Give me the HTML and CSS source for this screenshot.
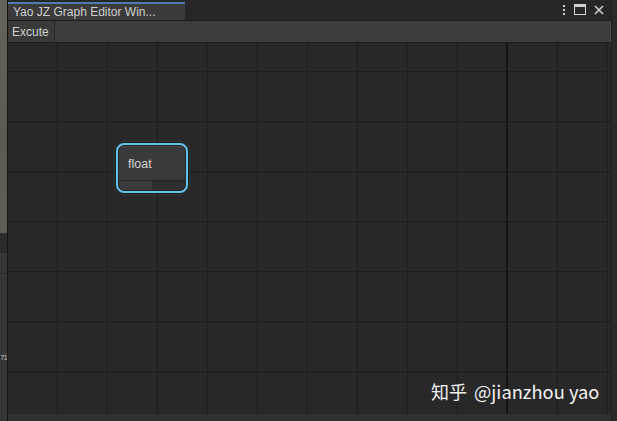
FILE: index.html
```html
<!DOCTYPE html>
<html lang="en">
<head>
    <meta charset="UTF-8">
    <title>Yao JZ Graph Editor Window</title>
    <link rel="stylesheet" href="styles.css">
</head>
<body>
<div class="app">
    <!-- the editor behind, cut off at the left -->
    <div class="side">
        <div class="side-scene"></div>
        <div class="side-bar"></div>
        <div class="side-panel"><span class="side-num">71</span></div>
    </div>

    <div class="window">
        <div class="titlebar">
            <div class="tab">Yao JZ Graph Editor Win...</div>
            <div class="win-icons">
                <svg width="4" height="12" viewBox="0 0 4 12"><rect x="1" y="1" width="2" height="2" fill="#d0d0d0"/><rect x="1" y="5" width="2" height="2" fill="#d0d0d0"/><rect x="1" y="9" width="2" height="2" fill="#d0d0d0"/></svg>
                <svg width="12" height="11" viewBox="0 0 12 11"><rect x="0.5" y="0.5" width="11" height="10" fill="none" stroke="#d0d0d0"/><rect x="1" y="1" width="10" height="2" fill="#d0d0d0"/></svg>
                <svg width="10" height="10" viewBox="0 0 10 10"><path d="M1 1 L9 9 M9 1 L1 9" stroke="#d0d0d0" stroke-width="1.6"/></svg>
            </div>
        </div>

        <div class="toolbar">
            <button class="tool-btn">Excute</button>
        </div>

        <div class="canvas">
            <div class="major-line"></div>
            <div class="node">
                <div class="node-title">float</div>
                <div class="node-foot">
                    <div class="node-port"></div>
                </div>
            </div>
        </div>
        <div class="statusbar"></div>
    </div>

    <div class="right-edge"></div>
</div>

<div class="watermark">知乎 <span class="wm-name">@jianzhou yao</span></div>
</body>
</html>
```

FILE: styles.css
```css
html, body {
    margin: 0;
    padding: 0;
    background-color: #191919;
    font-family: "Liberation Sans", Arial, sans-serif;
    overflow: hidden;
}

.app {
    display: flex;
    width: 617px;
    height: 421px;
}

/* left strip */
.side {
    width: 7px;
    display: flex;
    flex-direction: column;
}
.side-scene {
    height: 233px;
    background: linear-gradient(180deg, #67625a, #5d5850 60%, #625d55);
}
.side-bar {
    height: 20px;
    background-color: #2b2b2b;
}
.side-panel {
    flex: 1;
    background-color: #373737;
    background-image: linear-gradient(to bottom, transparent 0 20px, #262626 20px 21px, transparent 21px);
    display: flex;
    justify-content: flex-end;
    padding-top: 101px;
}
.side-num {
    color: #c8c8c8;
    font-size: 7px;
    letter-spacing: -0.6px;
    height: 11px;
}

.window {
    width: 603px;
    display: flex;
    flex-direction: column;
    border-left: 1px solid #151515;
}

.titlebar {
    height: 21px;
    background-color: #262626;
    display: flex;
    align-items: flex-end;
    justify-content: space-between;
    border-bottom: 1px solid #1c1c1c;
    box-sizing: border-box;
}
.tab {
    width: 177px;
    height: 18px;
    background-color: #3b3b3b;
    border-top: 2px solid #4b7cb2;
    color: #cfcfcf;
    font-size: 12px;
    line-height: 17px;
    padding-left: 5px;
    box-sizing: border-box;
}
.win-icons {
    display: flex;
    align-items: center;
    gap: 8px;
    height: 21px;
    padding-right: 7px;
}

.toolbar {
    height: 21px;
    background-color: #3d3d3d;
    display: flex;
    border-bottom: 1px solid #1d1d1d;
    border-right: 1px solid #4a4a4a;
}
.tool-btn {
    background-color: #393939;
    border: none;
    border-right: 1px solid #262626;
    color: #d0d0d0;
    font-family: "Liberation Sans", Arial, sans-serif;
    font-size: 12px;
    padding: 0 4px 0 4px;
    width: 47px;
    text-align: left;
}

.canvas {
    flex: 1;
    position: relative;
    background-color: #282828;
    background-image:
        repeating-linear-gradient(to right, transparent 0 48px, #252525 48px 49px, #1e1e1e 49px 50px),
        repeating-linear-gradient(to bottom, transparent 0 28px, #1e1e1e 28px 29px, #242424 29px 30px, transparent 30px 50px);
    overflow: hidden;
}
.major-line {
    position: absolute;
    left: 498px;
    top: 0;
    bottom: 0;
    width: 2px;
    background-color: #141414;
}

.node {
    position: absolute;
    left: 108px;
    top: 100px;
    width: 72px;
    height: 50px;
    box-sizing: border-box;
    border: 2px solid #62c4ea;
    border-radius: 8px;
    box-shadow: 0 0 0 1px #1b1b1b, 0 0 3px 1px rgba(80, 180, 220, 0.25), inset 0 0 0 1px #262626;
    background-color: #3a3a3a;
    padding: 1px;
    display: flex;
    flex-direction: column;
    overflow: hidden;
}
.node-title {
    flex: 1;
    color: #d4d4d4;
    font-size: 12.5px;
    padding: 10px 0 0 9px;
    border-top: 1px solid #444;
    border-radius: 5px 5px 0 0;
}
.node-foot {
    height: 9px;
    background-color: #2e2e2e;
    border-top: 1px solid #262626;
    display: flex;
    border-radius: 0 0 5px 5px;
    overflow: hidden;
}
.node-port {
    width: 33px;
    background-color: #3b3b3b;
    border-right: 1px solid #2a2a2a;
}

.statusbar {
    height: 7px;
    background-color: #303030;
}

.right-edge {
    flex: 1;
    background-color: #2a2a2a;
    border-left: 1px solid #1f1f1f;
}

.watermark {
    position: absolute;
    left: 431px;
    top: 378px;
    color: #f2f2f2;
    font-family: "Noto Sans CJK SC", "Noto Sans", sans-serif;
    font-size: 18px;
    white-space: nowrap;
}
.wm-name {
    margin-left: 3px;
    font-size: 18.3px;
}
```
